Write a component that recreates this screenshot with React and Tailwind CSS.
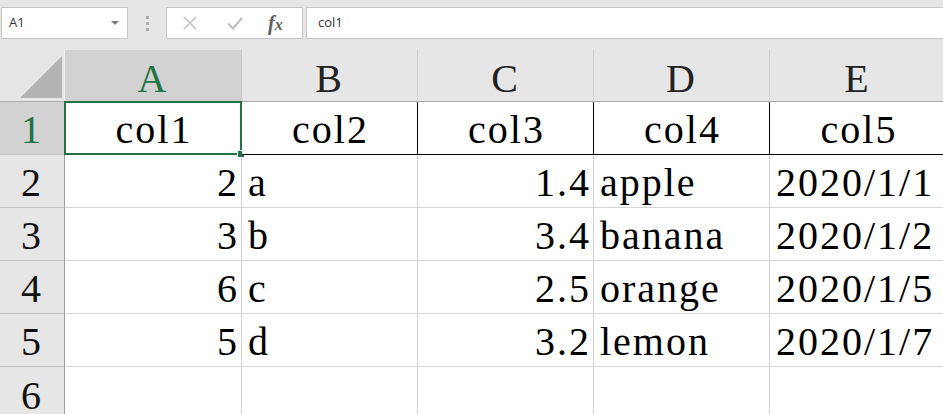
import React from 'react'

const cols = ['A', 'B', 'C', 'D', 'E']

const rows = [
  [{ v: '2', r: true }, { v: 'a' }, { v: '1.4', r: true }, { v: 'apple' }, { v: '2020/1/1' }],
  [{ v: '3', r: true }, { v: 'b' }, { v: '3.4', r: true }, { v: 'banana' }, { v: '2020/1/2' }],
  [{ v: '6', r: true }, { v: 'c' }, { v: '2.5', r: true }, { v: 'orange' }, { v: '2020/1/5' }],
  [{ v: '5', r: true }, { v: 'd' }, { v: '3.2', r: true }, { v: 'lemon' }, { v: '2020/1/7' }],
]

function Toolbar() {
  return (
    <div className="h-[50px] flex items-start pt-[7px] pl-[1px] font-['Open_Sans']">
      <div className="w-[127px] h-[32px] bg-white border border-[#c6c6c6] flex items-center pl-[7px] pr-[8px] text-[13px] text-[#333]">
        <span className="flex-1">A1</span>
        <svg width="8" height="5" viewBox="0 0 8 5"><path d="M0 0h8L4 4z" fill="#7a7a7a" /></svg>
      </div>
      <div className="w-[38px] h-[32px] flex flex-col items-center justify-center gap-[3px]">
        <span className="w-[3px] h-[3px] bg-[#ababab]" />
        <span className="w-[3px] h-[3px] bg-[#ababab]" />
        <span className="w-[3px] h-[3px] bg-[#ababab]" />
      </div>
      <div className="w-[137px] h-[32px] bg-white border border-[#c6c6c6] flex items-center">
        <svg className="ml-[15px]" width="16" height="16" viewBox="0 0 16 16"><path d="M2 2l12 12M14 2L2 14" stroke="#c4c4c4" strokeWidth="1.6" /></svg>
        <svg className="ml-[28px]" width="18" height="16" viewBox="0 0 18 16"><path d="M2 8.5l5 5L16 3" stroke="#c4c4c4" strokeWidth="2.4" fill="none" /></svg>
        <span className="ml-[24px] text-[20px] italic font-bold text-[#5f5f5f] leading-none font-['Liberation_Serif']">
          f<span className="text-[16px]">x</span>
        </span>
      </div>
      <div className="ml-[3px] flex-1 h-[32px] bg-white border border-[#c6c6c6] border-r-0 flex items-center pl-[11px] text-[13px] text-[#333]">
        col1
      </div>
    </div>
  )
}

export default function App() {
  return (
    <div className="w-[943px] h-[414px] overflow-hidden bg-[#e6e6e6]">
      <Toolbar />
      <div className="grid grid-cols-[65px_177px_176px_176px_176px_176px] grid-rows-[52px_53px_53px_53px_53px_53px_53px] font-['Liberation_Serif'] text-[40px] leading-[40px] tracking-[2px]">
        {/* corner */}
        <div className="bg-[#e6e6e6] border-b border-[#ababab] border-r border-r-[#f0f0f0] flex items-end justify-end pr-[2px] pb-[3px]">
          <div className="w-[42px] h-[42px] bg-[#b4b4b4] [clip-path:polygon(100%_0,100%_100%,0_100%)]" />
        </div>
        {cols.map((c, i) => (
          <div
            key={c}
            className={
              'border-b border-[#ababab] flex items-end justify-center pb-[2px] font-["Liberation_Serif"] ' +
              (i === 0 ? 'bg-[#d2d2d2] text-[#217346] border-r border-r-[#c8c8c8]' : 'bg-[#e6e6e6] text-[#222] border-r border-r-[#cfcfcf]')
            }
          >
            {c}
          </div>
        ))}

        {/* row 1 */}
        <div className="bg-[#d2d2d2] border-r border-[#9c9c9c] border-b border-b-[#c2c2c2] flex items-end justify-center pb-[4px] text-[#217346] font-['Liberation_Serif']">
          1
        </div>
        {['col1', 'col2', 'col3', 'col4', 'col5'].map((t, i) => (
          <div
            key={t}
            className={
              'relative bg-white border-b border-black flex items-end justify-center pb-[4px] pl-[2px] text-black font-["Liberation_Serif"] ' +
              (i < 4 ? 'border-r border-r-black' : '')
            }
          >
            {t}
            {i === 0 && (
              <div className="absolute -left-[1px] -top-[1px] -right-[1px] -bottom-[1px] border-2 border-[#217346]">
                <div className="absolute -right-[5px] -bottom-[5px] w-[8px] h-[8px] bg-[#217346] border border-white" />
              </div>
            )}
          </div>
        ))}

        {rows.map((r, ri) => (
          <React.Fragment key={ri}>
            <div className="bg-[#e6e6e6] border-r border-[#9c9c9c] border-b border-b-[#c2c2c2] flex items-end justify-center pb-[4px] text-[#111] font-['Liberation_Serif']">
              {ri + 2}
            </div>
            {r.map((c, ci) => (
              <div
                key={ci}
                className={
                  'bg-white border-r border-b border-[#d4d4d4] flex items-end pb-[4px] text-black whitespace-nowrap font-["Liberation_Serif"] ' +
                  (c.r ? 'justify-end pr-[2px]' : 'justify-start pl-[6px]')
                }
              >
                {c.v}
              </div>
            ))}
          </React.Fragment>
        ))}

        <div className="bg-[#e6e6e6] border-r border-[#9c9c9c] flex items-end justify-center pb-[4px] text-[#111] font-['Liberation_Serif']">
          6
        </div>
        {cols.map((c) => (
          <div key={c} className="bg-white border-r border-[#d4d4d4]" />
        ))}
      </div>
    </div>
  )
}
